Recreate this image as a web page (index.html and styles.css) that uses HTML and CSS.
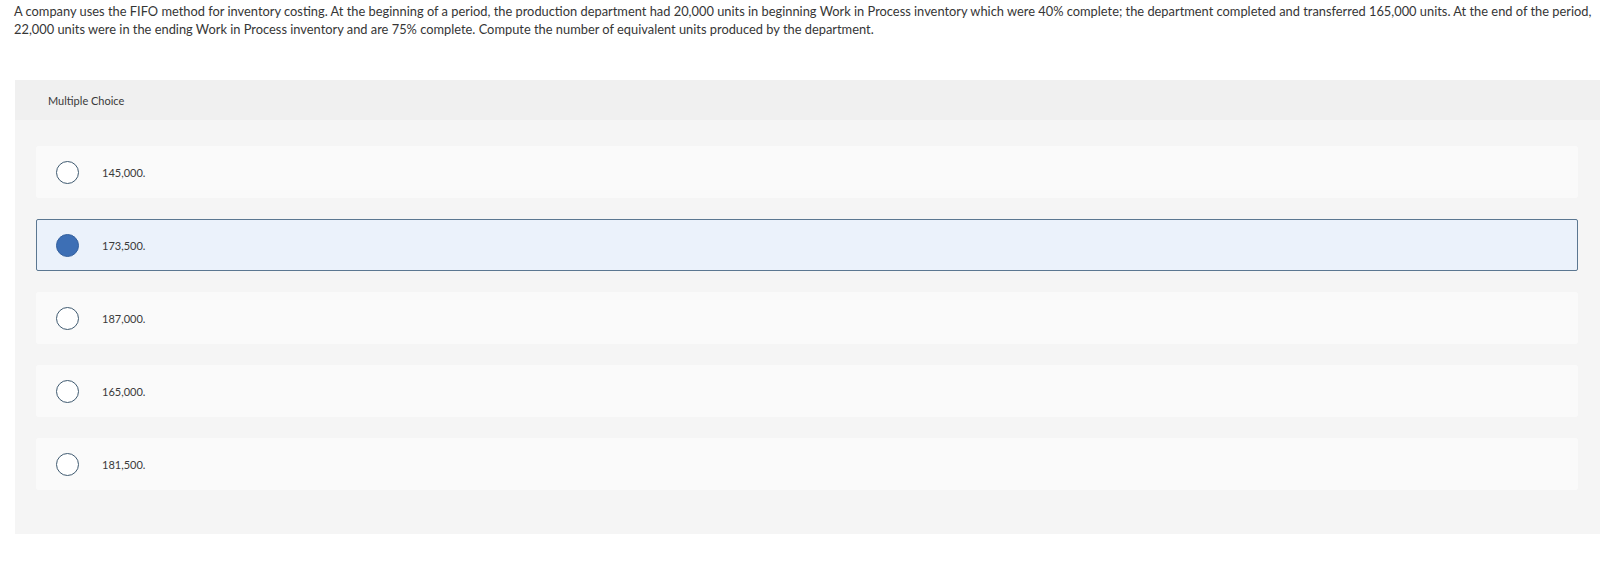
FILE: index.html
```html
<!DOCTYPE html>
<html>
<head>
<meta charset="utf-8">
<link rel="stylesheet" href="styles.css">
</head>
<body>
<p class="question">A company uses the FIFO method for inventory costing. At the beginning of a period, the production department had 20,000 units in beginning Work in Process inventory which were 40% complete; the department completed and transferred 165,000 units. At the end of the period, 22,000 units were in the ending Work in Process inventory and are 75% complete. Compute the number of equivalent units produced by the department.</p>
<section class="panel">
  <div class="panel-head">Multiple Choice</div>
  <div class="options">
    <div class="option"><span class="radio"></span><span class="label">145,000.</span></div>
    <div class="option selected"><span class="radio"></span><span class="label">173,500.</span></div>
    <div class="option"><span class="radio"></span><span class="label">187,000.</span></div>
    <div class="option"><span class="radio"></span><span class="label">165,000.</span></div>
    <div class="option"><span class="radio"></span><span class="label">181,500.</span></div>
  </div>
</section>
</body>
</html>
```
FILE: styles.css
```css
html, body {
  margin: 0;
  padding: 0;
  background: #ffffff;
}
body {
  font-family: Lato, "Open Sans", "Liberation Sans", sans-serif;
  color: #333333;
}
.question {
  margin: 0;
  padding: 3px 14px 0 14px;
  font-size: 12.85px;
  line-height: 17.5px;
  color: #363636;
}
.panel {
  margin: 42px 18px 0 15px;
  background: #f5f5f5;
  padding-bottom: 44px;
}
.panel-head {
  height: 40px;
  background: #f0f0f0;
  display: flex;
  align-items: center;
  padding-left: 33px;
  font-size: 11px;
  color: #3a3a3a;
}
.options {
  display: flex;
  flex-direction: column;
  gap: 21px;
  padding: 26px 22px 0 21px;
}
.option {
  height: 52px;
  box-sizing: border-box;
  background: #fafafa;
  border: 1px solid #fafafa;
  border-radius: 2px;
  display: flex;
  align-items: center;
  padding-left: 19px;
}
.option.selected {
  background: #ebf2fb;
  border-color: #5b7791;
}
.radio {
  width: 23px;
  height: 23px;
  box-sizing: border-box;
  border: 1.5px solid #3f5a70;
  border-radius: 50%;
  background: #fff;
  flex: none;
}
.selected .radio {
  background: #3d6fb5;
  border-color: #34619e;
}
.label {
  margin-left: 23px;
  font-size: 11px;
  color: #3a3a3a;
}
```
